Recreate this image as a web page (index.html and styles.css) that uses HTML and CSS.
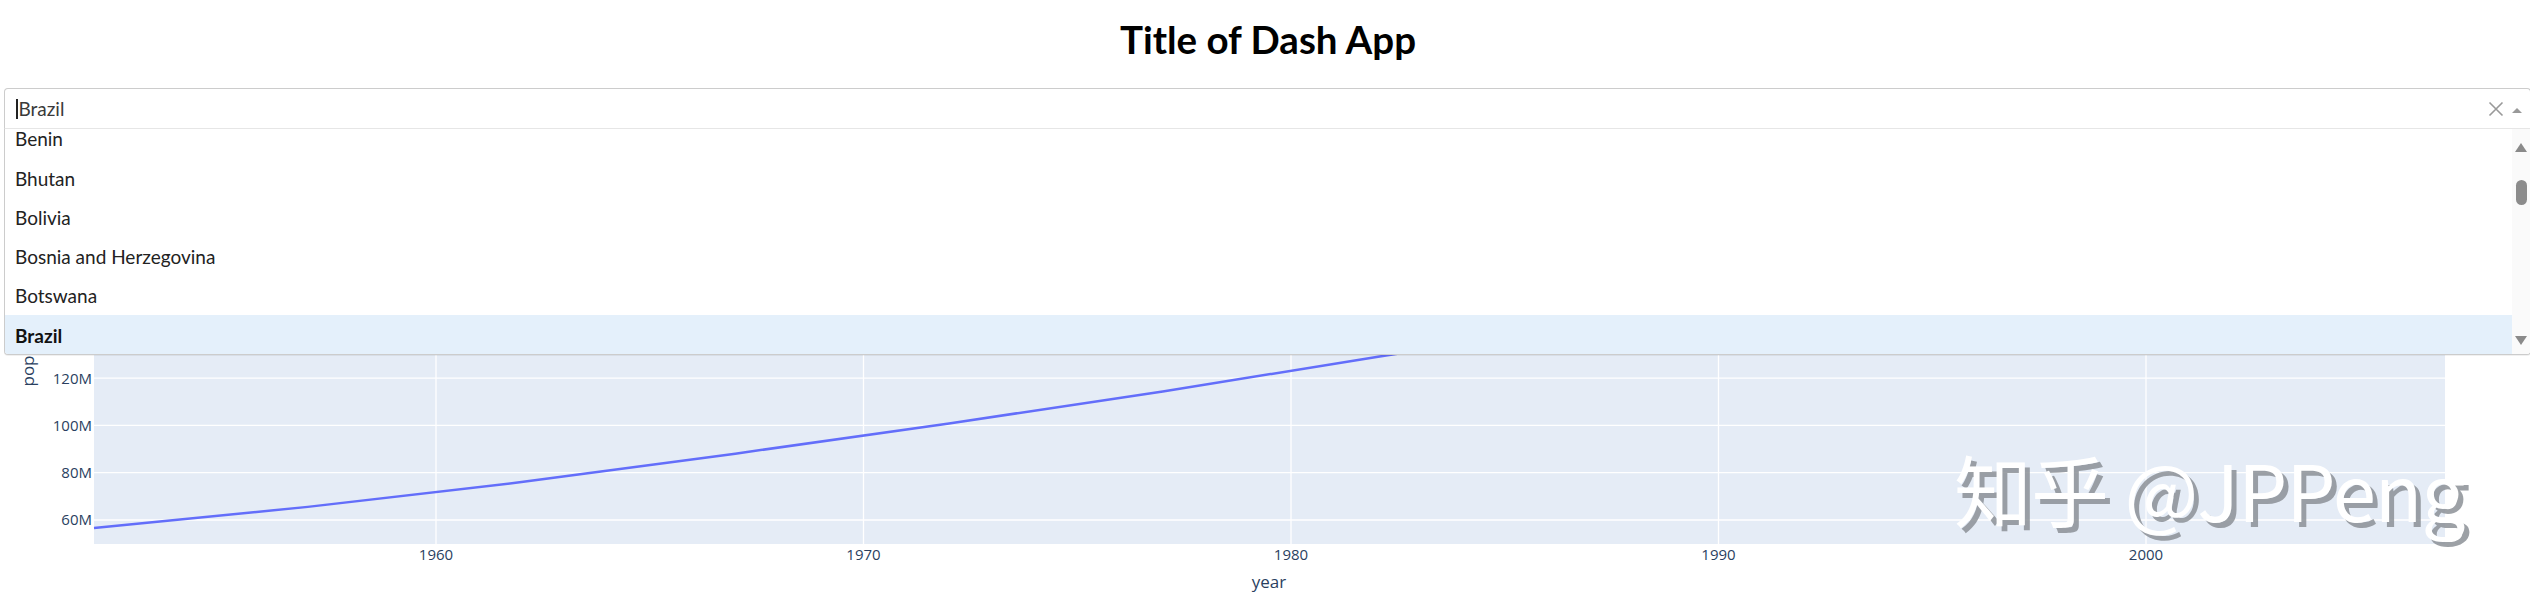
FILE: index.html
```html
<!DOCTYPE html>
<html lang="en">
<head>
<meta charset="utf-8">
<title>Title of Dash App</title>
<link rel="stylesheet" href="styles.css">
</head>
<body>
  <header class="header">
    <h1 class="title">Title of Dash App</h1>
  </header>

  <div class="dropdown">
    <div class="control">
      <div class="value"><span class="caret"></span>Brazil</div>
      <span class="clear" aria-label="Clear">
        <svg width="16" height="16" viewBox="0 0 16 16"><path d="M1.5 1.5 L14.5 14.5 M14.5 1.5 L1.5 14.5" stroke="#999" stroke-width="1.6" fill="none"/></svg>
      </span>
      <span class="arrow-zone"><span class="arrow-up"></span></span>
    </div>
    <div class="menu">
      <div class="options">
        <div class="option">Benin</div>
        <div class="option">Bhutan</div>
        <div class="option">Bolivia</div>
        <div class="option">Bosnia and Herzegovina</div>
        <div class="option">Botswana</div>
        <div class="option option-focused">Brazil</div>
      </div>
      <div class="scrollbar">
        <span class="sb-up"></span>
        <span class="sb-thumb"></span>
        <span class="sb-down"></span>
      </div>
    </div>
  </div>

  <div class="graph">
    <svg class="chart" width="2530" height="483" viewBox="0 129 2530 483" xmlns="http://www.w3.org/2000/svg">
      <rect x="94" y="197" width="2351" height="347" fill="#E5ECF6"/>
      <g stroke="#ffffff" stroke-width="1.3">
        <line x1="94" x2="2445" y1="520" y2="520"/>
        <line x1="94" x2="2445" y1="472.7" y2="472.7"/>
        <line x1="94" x2="2445" y1="425.4" y2="425.4"/>
        <line x1="94" x2="2445" y1="378.1" y2="378.1"/>
        <line x1="94" x2="2445" y1="330.8" y2="330.8"/>
        <line x1="94" x2="2445" y1="283.5" y2="283.5"/>
        <line x1="94" x2="2445" y1="236.3" y2="236.3"/>
        <line y1="197" y2="544" x1="436" x2="436"/>
        <line y1="197" y2="544" x1="863.5" x2="863.5"/>
        <line y1="197" y2="544" x1="1291" x2="1291"/>
        <line y1="197" y2="544" x1="1718.5" x2="1718.5"/>
        <line y1="197" y2="544" x1="2146" x2="2146"/>
      </g>
      <path d="M94 528.04 L307.75 506.87 L521.5 482.07 L735.25 453.66 L949 423.41 L1162.75 391.56 L1376.5 356.91 L1590.25 323.85 L1804 293.01 L2017.75 263.28 L2231.5 236.41 L2445.25 212.53" fill="none" stroke="#636EFA" stroke-width="2.5" stroke-linejoin="round"/>
      <g class="tick" text-anchor="end">
        <text x="92" y="525.4">60M</text>
        <text x="92" y="478.1">80M</text>
        <text x="92" y="430.8">100M</text>
        <text x="92" y="383.5">120M</text>
        <text x="92" y="336.2">140M</text>
        <text x="92" y="288.9">160M</text>
        <text x="92" y="241.7">180M</text>
      </g>
      <g class="tick" text-anchor="middle">
        <text x="436" y="560">1960</text>
        <text x="863.5" y="560">1970</text>
        <text x="1291" y="560">1980</text>
        <text x="1718.5" y="560">1990</text>
        <text x="2146" y="560">2000</text>
      </g>
      <text class="axis-title" x="1269" y="588" text-anchor="middle">year</text>
      <text class="axis-title" x="34" y="371" text-anchor="middle" transform="rotate(-90 34 371)">pop</text>
    </svg>
    <div class="watermark">知乎 @JPPeng</div>
  </div>
</body>
</html>
```
FILE: styles.css
```css
html, body {
  margin: 0;
  padding: 0;
  background: #ffffff;
  overflow: hidden;
}

body {
  font-family: Lato, "Noto Sans", sans-serif;
  color: #333333;
  width: 2530px;
}

.header {
  height: 88px;
  box-sizing: border-box;
  padding-top: 16px;
  padding-left: 6px;
  text-align: center;
}

.title {
  margin: 0;
  font-family: Lato, "Noto Sans", sans-serif;
  font-weight: 700;
  font-size: 38.5px;
  line-height: 47px;
  color: #000000;
}

.dropdown {
  position: relative;
  margin: 0 -1px 0 4px;
  z-index: 2;
}

.control {
  display: flex;
  align-items: center;
  height: 41px;
  box-sizing: border-box;
  border: 1px solid #cccccc;
  border-bottom-color: #e6e6e6;
  border-radius: 4px 4px 0 0;
  background: #ffffff;
}

.value {
  flex: 1;
  display: flex;
  align-items: center;
  padding-left: 11px;
  font-size: 19px;
  color: #3a3a3a;
}

.caret {
  display: inline-block;
  width: 1.5px;
  height: 20px;
  background: #222222;
  margin-right: 1px;
}

.clear {
  width: 16px;
  height: 39px;
  display: flex;
  align-items: center;
  justify-content: center;
}

.arrow-zone {
  width: 26px;
  display: flex;
  align-items: center;
  justify-content: center;
}

.arrow-up {
  width: 0;
  height: 0;
  border-style: solid;
  border-width: 0 5px 5px 5px;
  border-color: transparent transparent #999999 transparent;
  margin-top: 4px;
}

.menu {
  position: absolute;
  top: 100%;
  left: 0;
  right: 0;
  height: 226px;
  box-sizing: border-box;
  display: flex;
  background: #ffffff;
  border: 1px solid #cccccc;
  border-top: none;
  border-radius: 0 0 4px 4px;
  box-shadow: 0 1px 0 rgba(0, 0, 0, 0.06);
  overflow: hidden;
}

.options {
  flex: 1;
  overflow: hidden;
}

.option {
  box-sizing: border-box;
  height: 39.3px;
  padding-top: 3px;
  line-height: 36.3px;
  padding-left: 10px;
  font-size: 19px;
  color: #222222;
  white-space: nowrap;
}

.option:first-child {
  margin-top: -10.8px;
}

.option-focused {
  background: #e4f0fb;
  font-weight: 700;
  color: #111111;
}

.scrollbar {
  width: 18px;
  display: flex;
  flex-direction: column;
  align-items: center;
  background: #fafafa;
  padding-top: 14px;
  box-sizing: border-box;
}

.sb-up {
  width: 0;
  height: 0;
  border-style: solid;
  border-width: 0 6px 9px 6px;
  border-color: transparent transparent #8a8a8a transparent;
}

.sb-thumb {
  width: 11px;
  height: 25px;
  margin-top: 28px;
  border-radius: 6px;
  background: #8c8c8c;
}

.sb-down {
  width: 0;
  height: 0;
  margin-top: 131px;
  border-style: solid;
  border-width: 9px 6px 0 6px;
  border-color: #8a8a8a transparent transparent transparent;
}

.graph {
  position: relative;
  height: 483px;
}

.chart {
  display: block;
}

.tick {
  font-family: "Open Sans", "DejaVu Sans", sans-serif;
  font-size: 15px;
  fill: #2a3f5f;
}

.axis-title {
  font-family: "Open Sans", "DejaVu Sans", sans-serif;
  font-size: 17px;
  fill: #2a3f5f;
}

.watermark {
  position: absolute;
  left: 1954px;
  top: 320px;
  font-family: "Noto Sans CJK SC", "Noto Sans", sans-serif;
  font-size: 78px;
  line-height: 78px;
  letter-spacing: -1px;
  color: #ffffff;
  white-space: nowrap;
  text-shadow: 5px 5px 0 rgba(140, 144, 150, 0.85);
  pointer-events: none;
}
```
